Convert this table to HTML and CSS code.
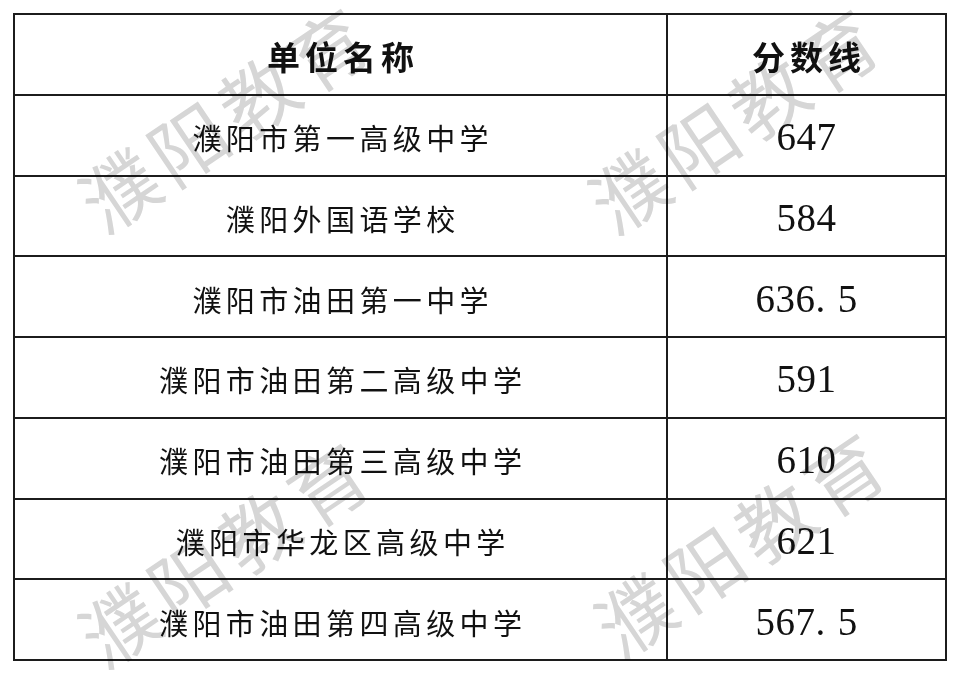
FILE: index.html
```html
<!DOCTYPE html>
<html lang="zh-CN">
<head>
<meta charset="utf-8">
<title>分数线</title>
<link rel="stylesheet" href="styles.css">
</head>
<body>
<div class="page">
  <table class="score-table">
    <colgroup>
      <col class="col-name">
      <col class="col-score">
    </colgroup>
    <thead>
      <tr>
        <th class="head">单位名称</th>
        <th class="head">分数线</th>
      </tr>
    </thead>
    <tbody>
      <tr><td class="name">濮阳市第一高级中学</td><td class="score">647</td></tr>
      <tr><td class="name">濮阳外国语学校</td><td class="score">584</td></tr>
      <tr><td class="name">濮阳市油田第一中学</td><td class="score">636<span class="dot">.</span>5</td></tr>
      <tr><td class="name">濮阳市油田第二高级中学</td><td class="score">591</td></tr>
      <tr><td class="name">濮阳市油田第三高级中学</td><td class="score">610</td></tr>
      <tr><td class="name">濮阳市华龙区高级中学</td><td class="score">621</td></tr>
      <tr><td class="name">濮阳市油田第四高级中学</td><td class="score">567<span class="dot">.</span>5</td></tr>
    </tbody>
  </table>
  <div class="watermark wm-tl">濮阳教育</div>
  <div class="watermark wm-tr">濮阳教育</div>
  <div class="watermark wm-bl">濮阳教育</div>
  <div class="watermark wm-br">濮阳教育</div>
</div>
</body>
</html>
```

FILE: styles.css
```css
html, body {
  margin: 0;
  padding: 0;
  background: #ffffff;
}

.page {
  position: relative;
  width: 960px;
  height: 674px;
  overflow: hidden;
  padding: 13px 0 0 13px;
  box-sizing: border-box;
}

.score-table {
  border-collapse: collapse;
  table-layout: fixed;
  width: 932px;
  color: #111111;
}

.col-name { width: 653px; }
.col-score { width: 279px; }

.score-table th,
.score-table td {
  border: 2px solid #1c1c1c;
  height: 73.75px;
  padding: 5px 0 0 0;
  text-align: center;
  vertical-align: middle;
  line-height: 1.2;
}

.head {
  font-family: "Noto Sans CJK SC", sans-serif;
  font-weight: 700;
  font-size: 33px;
  letter-spacing: 5px;
  text-indent: 5px;
}

.name {
  font-family: "Noto Sans CJK SC", sans-serif;
  font-weight: 400;
  font-size: 29px;
  letter-spacing: 4.4px;
  text-indent: 4.4px;
}

.score {
  font-family: "Liberation Serif", "Times New Roman", serif;
  font-size: 39px;
  letter-spacing: 0.5px;
}

.dot {
  margin-right: 12px;
}

.watermark {
  position: absolute;
  font-family: "Noto Sans CJK SC", sans-serif;
  font-weight: 400;
  font-size: 76px;
  letter-spacing: 8px;
  line-height: 1;
  color: #d6d6d6;
  white-space: nowrap;
  mix-blend-mode: multiply;
  pointer-events: none;
  transform: translate(-50%, -50%) rotate(-34deg);
}

.wm-tl { left: 225px; top: 115px; }
.wm-tr { left: 735px; top: 116px; }
.wm-bl { left: 225px; top: 550px; }
.wm-br { left: 741px; top: 540px; }
```
